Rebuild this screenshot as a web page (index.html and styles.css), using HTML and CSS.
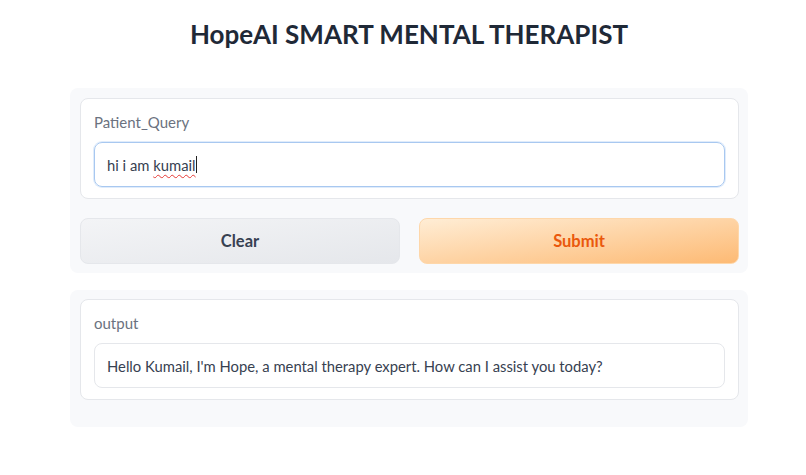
FILE: index.html
```html
<!DOCTYPE html>
<html>
<head>
<meta charset="utf-8">
<link rel="stylesheet" href="styles.css">
</head>
<body>
<div class="app">
  <h1 class="title">HopeAI SMART MENTAL THERAPIST</h1>
  <div class="panel">
    <div class="block">
      <div class="label">Patient_Query</div>
      <div class="input focused"><span>hi i am </span><span class="misspelled">kumail</span><span class="caret"></span></div>
    </div>
    <div class="buttons">
      <button class="btn secondary">Clear</button>
      <button class="btn primary">Submit</button>
    </div>
  </div>
  <div class="panel panel-out">
    <div class="block">
      <div class="label">output</div>
      <div class="input">Hello Kumail, I'm Hope, a mental therapy expert. How can I assist you today?</div>
    </div>
  </div>
</div>
</body>
</html>
```
FILE: styles.css
```css
* { box-sizing: border-box; }
html, body { margin: 0; padding: 0; background: #ffffff; }
body { font-family: "Lato", "Noto Sans", sans-serif; }
.app {
  width: 678px;
  margin-left: 70px;
  padding-top: 16px;
}
.title {
  margin: 0 0 36px 0;
  height: 36px;
  line-height: 36px;
  text-align: center;
  font-size: 26px;
  font-weight: 700;
  color: #1f2937;
}
.panel {
  background: #f8f9fb;
  border-radius: 8px;
  padding: 10px 9px 9px 10px;
  display: flex;
  flex-direction: column;
  gap: 19px;
}
.panel-out { margin-top: 17px; padding-top: 9px; padding-bottom: 27px; }
.block {
  background: #ffffff;
  border: 1px solid #e5e7eb;
  border-radius: 8px;
  padding: 13px 13px 11px 13px;
  height: 101px;
}
.label {
  font-size: 15px;
  color: #6b7280;
  line-height: 20px;
  margin-bottom: 10px;
}
.input {
  height: 45px;
  border: 1px solid #e5e7eb;
  border-radius: 8px;
  padding: 0 12px;
  display: flex;
  align-items: center;
  font-size: 14.8px;
  color: #374151;
  white-space: pre;
}
.input.focused {
  border-color: #a8c8f0;
  box-shadow: 0 0 0 1px #e0ecfb;
}
.misspelled {
  text-decoration: underline wavy #e53935;
  text-decoration-thickness: 1px;
  text-underline-offset: 3px;
}
.caret {
  display: inline-block;
  width: 1px;
  height: 17px;
  background: #222;
}
.buttons {
  display: flex;
  gap: 19px;
}
.btn {
  flex: 1;
  height: 46px;
  border-radius: 8px;
  font-family: "Lato", "Noto Sans", sans-serif;
  font-size: 16.5px;
  font-weight: 700;
  cursor: pointer;
}
.secondary {
  background: linear-gradient(to bottom right, #f3f4f6, #e5e7eb);
  border: 1px solid #e5e7eb;
  color: #374151;
}
.primary {
  background: linear-gradient(to bottom right, #ffedd5, #fdba74);
  border: 1px solid #fed7aa;
  color: #ea580c;
}
```
